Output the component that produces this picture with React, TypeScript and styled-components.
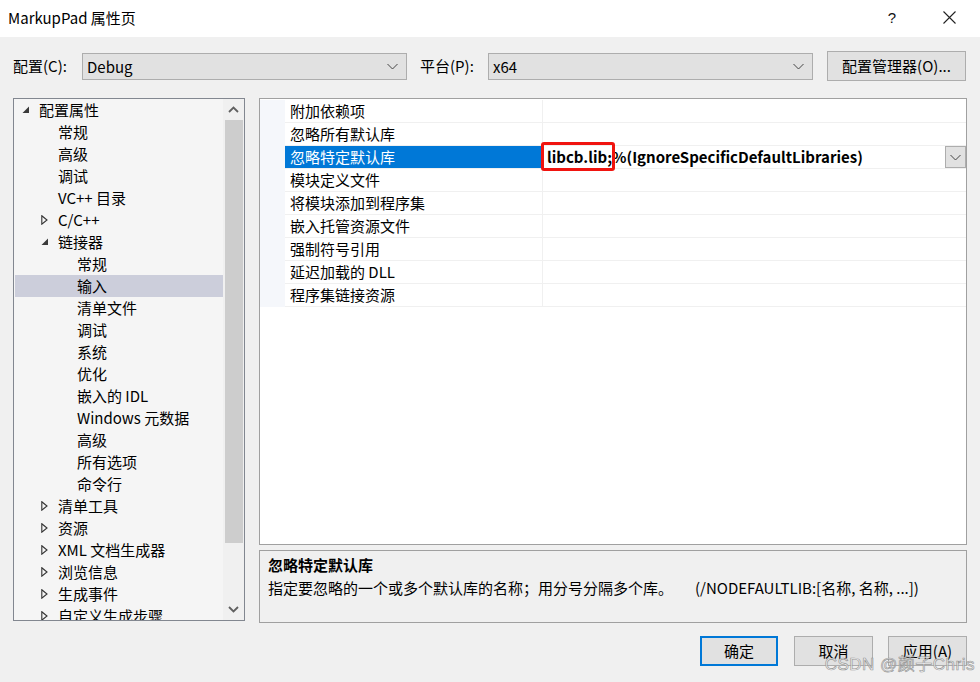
import React from "react";
import styled, { createGlobalStyle } from "styled-components";

const GlobalStyle = createGlobalStyle`
  html, body {
    margin: 0;
    padding: 0;
  }
  body {
    background: #f0f0f0;
    color: #000;
    font-family: "Noto Sans CJK SC", "Noto Sans", sans-serif;
    font-size: 15px;
  }
`;

const Window = styled.div`
  position: relative;
  width: 980px;
  height: 682px;
  display: flex;
  flex-direction: column;
  overflow: hidden;
  background: #f0f0f0;
`;

const TitleBar = styled.div`
  height: 37px;
  flex: none;
  display: flex;
  align-items: center;
  padding-left: 8px;
  background: #ffffff;
`;

const Title = styled.span`
  font-size: 15px;
  line-height: 20px;
  margin-top: -2px;
`;

const TitleButtons = styled.div`
  margin-left: auto;
  display: flex;
  align-items: center;
  height: 100%;
`;

const TitleButton = styled.div<{ $w: number }>`
  width: ${({ $w }) => $w}px;
  height: 100%;
  display: flex;
  align-items: center;
  justify-content: center;
  font-family: "Liberation Sans", sans-serif;
  font-size: 15px;
  color: #111;
  margin-top: -2px;
`;

const Content = styled.div`
  flex: 1;
  display: flex;
  flex-direction: column;
  padding: 14px 13px 0;
`;

const TopRow = styled.div`
  display: flex;
  align-items: center;
  height: 30px;
`;

const Label = styled.span<{ $w: number; $ml?: number }>`
  width: ${({ $w }) => $w}px;
  margin-left: ${({ $ml }) => $ml || 0}px;
  line-height: 20px;
  white-space: nowrap;
`;

const Combo = styled.div`
  width: 325px;
  height: 27px;
  box-sizing: border-box;
  border: 1px solid #adadad;
  background: #e1e1e1;
  display: flex;
  align-items: center;
  padding: 1px 8px 0 4px;
  line-height: 20px;

  span {
    flex: 1;
  }
`;

const Button = styled.div<{ $w: number; $ml?: number; $default?: boolean }>`
  width: ${({ $w }) => $w}px;
  height: 30px;
  margin-left: ${({ $ml }) => $ml || 0}px;
  box-sizing: border-box;
  border: ${({ $default }) =>
    $default ? "2px solid #0078d7" : "1px solid #adadad"};
  background: #e1e1e1;
  display: flex;
  align-items: center;
  justify-content: center;
  line-height: 20px;
  white-space: nowrap;
`;

const Main = styled.div`
  display: flex;
  gap: 14px;
  margin-top: 17px;
  height: 525px;
`;

const TreePanel = styled.div`
  width: 232px;
  height: 523px;
  box-sizing: border-box;
  border: 1px solid #828790;
  background: #f5f5f5;
  display: flex;
`;

const TreeList = styled.div`
  flex: 1;
  overflow: hidden;
  padding: 0 0 0 1px;
`;

const TreeRow = styled.div<{ $level: number; $selected?: boolean }>`
  height: 22px;
  display: flex;
  align-items: center;
  padding-left: ${({ $level }) => 7 + $level * 19}px;
  background: ${({ $selected }) => ($selected ? "#cccedb" : "transparent")};
  line-height: 20px;
  white-space: nowrap;
`;

const Expander = styled.span`
  width: 17px;
  flex: none;
  display: flex;
  align-items: center;
`;

const Scrollbar = styled.div`
  width: 21px;
  flex: none;
  display: flex;
  flex-direction: column;
  align-items: center;
  background: #f0f0f0;
`;

const ScrollArrow = styled.div`
  height: 21px;
  width: 100%;
  display: flex;
  align-items: center;
  justify-content: center;
`;

const ScrollThumb = styled.div`
  width: 18px;
  height: 423px;
  background: #cdcdcd;
`;

const ScrollTrack = styled.div`
  flex: 1;
`;

const RightColumn = styled.div`
  flex: 1;
  display: flex;
  flex-direction: column;
`;

const Grid = styled.div`
  height: 447px;
  box-sizing: border-box;
  border: 1px solid #a0a0a0;
  background: #ffffff;
  padding-top: 1px;
`;

const GridRow = styled.div`
  display: grid;
  grid-template-columns: 25px 258px 1fr;
  height: 23px;
`;

const MarginCell = styled.div`
  background: #f5f7fb;
`;

const NameCell = styled.div<{ $selected?: boolean }>`
  display: flex;
  align-items: center;
  padding-left: 5px;
  box-sizing: border-box;
  border-bottom: 1px solid #f0f0f0;
  border-right: 1px solid #f0f0f0;
  background: ${({ $selected }) => ($selected ? "#0078d7" : "#ffffff")};
  color: ${({ $selected }) => ($selected ? "#ffffff" : "#000000")};
  line-height: 20px;
  white-space: nowrap;
`;

const ValueCell = styled.div`
  display: flex;
  align-items: center;
  padding-left: 4px;
  box-sizing: border-box;
  border-bottom: 1px solid #f0f0f0;
  line-height: 20px;
  white-space: nowrap;
`;

const ValueText = styled.span`
  flex: 1;
  font-weight: bold;
`;

const Marked = styled.span`
  position: relative;

  &::after {
    content: "";
    position: absolute;
    left: -6px;
    right: -3px;
    top: -4px;
    bottom: -4px;
    border: 3px solid #f0140f;
    border-radius: 3px;
  }
`;

const CellDrop = styled.div`
  width: 21px;
  height: 22px;
  box-sizing: border-box;
  border: 1px solid #adadad;
  background: #e1e1e1;
  display: flex;
  align-items: center;
  justify-content: center;
`;

const Description = styled.div`
  margin-top: 5px;
  height: 73px;
  box-sizing: border-box;
  border: 1px solid #a0a0a0;
  background: #f0f0f0;
  padding: 4px 8px;
`;

const DescTitle = styled.div`
  font-weight: bold;
  line-height: 20px;
`;

const DescText = styled.div`
  margin-top: 3px;
  line-height: 20px;
  white-space: nowrap;
`;

const Switch = styled.span`
  margin-left: 22px;
`;

const Footer = styled.div`
  display: flex;
  justify-content: flex-end;
  margin-top: 13px;
`;

const Watermark = styled.div`
  position: absolute;
  right: 5px;
  bottom: 7px;
  font-family: "Liberation Sans", "Noto Sans CJK SC", sans-serif;
  font-size: 17px;
  color: rgba(255, 255, 255, 0.7);
  -webkit-text-stroke: 0.7px rgba(130, 130, 130, 0.8);
  letter-spacing: 0.5px;
  pointer-events: none;
`;

const Chevron = ({ up, color = "#606060" }: { up?: boolean; color?: string }) => (
  <svg width="11" height="7" viewBox="0 0 11 7">
    <path
      d={up ? "M1 6 L5.5 1.5 L10 6" : "M1 1 L5.5 5.5 L10 1"}
      fill="none"
      stroke={color}
      strokeWidth="1.8"
    />
  </svg>
);

const ComboArrow = () => (
  <svg width="11" height="7" viewBox="0 0 11 7">
    <path d="M0.5 1 L5.5 6 L10.5 1" fill="none" stroke="#444" strokeWidth="1" />
  </svg>
);

const CloseIcon = () => (
  <svg width="13" height="13" viewBox="0 0 13 13">
    <path d="M0.5 0.5 L12.5 12.5 M12.5 0.5 L0.5 12.5" stroke="#222" strokeWidth="1.1" />
  </svg>
);

const ExpandedMark = () => (
  <svg width="8" height="8" viewBox="0 0 8 8">
    <polygon points="7,0.5 7,7 0.5,7" fill="#3a3a3a" />
  </svg>
);

const CollapsedMark = () => (
  <svg width="7" height="10" viewBox="0 0 7 10">
    <polygon points="0.8,0.8 6,5 0.8,9.2" fill="none" stroke="#333" strokeWidth="1.1" />
  </svg>
);

type TreeItem = {
  label: string;
  level: number;
  state?: "open" | "closed";
  selected?: boolean;
};

const treeItems: TreeItem[] = [
  { label: "配置属性", level: 0, state: "open" },
  { label: "常规", level: 1 },
  { label: "高级", level: 1 },
  { label: "调试", level: 1 },
  { label: "VC++ 目录", level: 1 },
  { label: "C/C++", level: 1, state: "closed" },
  { label: "链接器", level: 1, state: "open" },
  { label: "常规", level: 2 },
  { label: "输入", level: 2, selected: true },
  { label: "清单文件", level: 2 },
  { label: "调试", level: 2 },
  { label: "系统", level: 2 },
  { label: "优化", level: 2 },
  { label: "嵌入的 IDL", level: 2 },
  { label: "Windows 元数据", level: 2 },
  { label: "高级", level: 2 },
  { label: "所有选项", level: 2 },
  { label: "命令行", level: 2 },
  { label: "清单工具", level: 1, state: "closed" },
  { label: "资源", level: 1, state: "closed" },
  { label: "XML 文档生成器", level: 1, state: "closed" },
  { label: "浏览信息", level: 1, state: "closed" },
  { label: "生成事件", level: 1, state: "closed" },
  { label: "自定义生成步骤", level: 1, state: "closed" },
];

const properties = [
  "附加依赖项",
  "忽略所有默认库",
  "忽略特定默认库",
  "模块定义文件",
  "将模块添加到程序集",
  "嵌入托管资源文件",
  "强制符号引用",
  "延迟加载的 DLL",
  "程序集链接资源",
];

const SELECTED_PROP = 2;

export default function App() {
  return (
    <>
      <GlobalStyle />
      <Window>
        <TitleBar>
          <Title>MarkupPad 属性页</Title>
          <TitleButtons>
            <TitleButton $w={52}>?</TitleButton>
            <TitleButton $w={62}>
              <CloseIcon />
            </TitleButton>
          </TitleButtons>
        </TitleBar>

        <Content>
          <TopRow>
            <Label $w={69}>配置(C):</Label>
            <Combo>
              <span>Debug</span>
              <ComboArrow />
            </Combo>
            <Label $w={68} $ml={13}>
              平台(P):
            </Label>
            <Combo>
              <span>x64</span>
              <ComboArrow />
            </Combo>
            <Button $w={139} $ml={14}>
              配置管理器(O)...
            </Button>
          </TopRow>

          <Main>
            <TreePanel>
              <TreeList>
                {treeItems.map((item, i) => (
                  <TreeRow key={i} $level={item.level} $selected={item.selected}>
                    <Expander>
                      {item.state === "open" && <ExpandedMark />}
                      {item.state === "closed" && <CollapsedMark />}
                    </Expander>
                    {item.label}
                  </TreeRow>
                ))}
              </TreeList>
              <Scrollbar>
                <ScrollArrow>
                  <Chevron up />
                </ScrollArrow>
                <ScrollThumb />
                <ScrollTrack />
                <ScrollArrow>
                  <Chevron />
                </ScrollArrow>
              </Scrollbar>
            </TreePanel>

            <RightColumn>
              <Grid>
                {properties.map((name, i) => (
                  <GridRow key={name}>
                    <MarginCell />
                    <NameCell $selected={i === SELECTED_PROP}>{name}</NameCell>
                    <ValueCell>
                      {i === SELECTED_PROP && (
                        <>
                          <ValueText>
                            <Marked>libcb.lib;</Marked>
                            %(IgnoreSpecificDefaultLibraries)
                          </ValueText>
                          <CellDrop>
                            <ComboArrow />
                          </CellDrop>
                        </>
                      )}
                    </ValueCell>
                  </GridRow>
                ))}
              </Grid>
              <Description>
                <DescTitle>忽略特定默认库</DescTitle>
                <DescText>
                  指定要忽略的一个或多个默认库的名称；用分号分隔多个库。
                  <Switch>(/NODEFAULTLIB:[名称, 名称, ...])</Switch>
                </DescText>
              </Description>
            </RightColumn>
          </Main>

          <Footer>
            <Button $w={78} $default>
              确定
            </Button>
            <Button $w={79} $ml={16}>
              取消
            </Button>
            <Button $w={79} $ml={15}>
              应用(A)
            </Button>
          </Footer>
        </Content>

        <Watermark>CSDN @颜子Chris</Watermark>
      </Window>
    </>
  );
}
